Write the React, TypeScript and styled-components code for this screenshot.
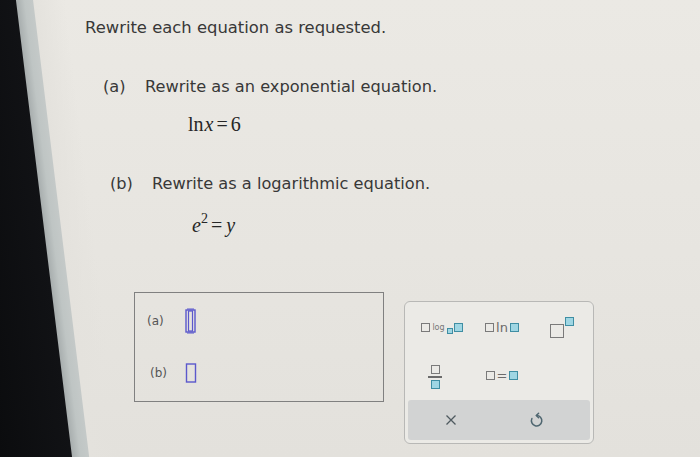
import React from 'react'
import styled, { createGlobalStyle } from 'styled-components'

const GlobalStyle = createGlobalStyle`
  html, body {
    margin: 0;
    padding: 0;
    background: #0b0c0e;
  }
`

export default function App() {
  return (
    <>
      <GlobalStyle />
      <Screen>
        <Page>
          <Heading>Rewrite each equation as requested.</Heading>

          <Part $top={39} $indent={18}>
            <PartLabel>(a)</PartLabel>
            <span>Rewrite as an exponential equation.</span>
          </Part>
          <MathLine $top={17} $indent={103}>
            <Up>ln</Up>
            <It>x</It>
            <Eq>=</Eq>
            <Up>6</Up>
          </MathLine>

          <Part $top={40} $indent={25}>
            <PartLabel>(b)</PartLabel>
            <span>Rewrite as a logarithmic equation.</span>
          </Part>
          <MathLine $top={21} $indent={106}>
            <It>e</It>
            <Sup>2</Sup>
            <Eq>=</Eq>
            <It>y</It>
          </MathLine>

          <BottomRow>
            <AnswerBox>
              <AnswerRow>
                <AnswerLabel>(a)</AnswerLabel>
                <svg width="12" height="26" viewBox="0 0 12 26">
                  <rect x="1" y="2" width="9" height="22" fill="none" stroke="#5b58cc" strokeWidth="1.4" />
                  <rect x="3.5" y="3" width="4" height="20" fill="none" stroke="#5b58cc" strokeWidth="1.2" />
                  <path d="M2 1h7M2 25h7" stroke="#5b58cc" strokeWidth="1" />
                </svg>
              </AnswerRow>
              <AnswerRow>
                <AnswerLabel $shift={3}>(b)</AnswerLabel>
                <svg width="12" height="20" viewBox="0 0 12 20">
                  <rect x="1.5" y="1" width="9" height="18" fill="none" stroke="#5b58cc" strokeWidth="1.4" />
                </svg>
              </AnswerRow>
            </AnswerBox>

            <Keypad>
              <KeyGrid>
                <Key>
                  <Slot />
                  <Small>log</Small>
                  <Slot $teal $tiny $down />
                  <Slot $teal />
                </Key>
                <Key>
                  <Slot />
                  <KeyText>ln</KeyText>
                  <Slot $teal />
                </Key>
                <Key>
                  <Slot $big $down />
                  <Slot $teal $up />
                </Key>
                <Key>
                  <Fraction>
                    <Slot />
                    <Bar />
                    <Slot $teal />
                  </Fraction>
                </Key>
                <Key>
                  <Slot />
                  <KeyText>=</KeyText>
                  <Slot $teal />
                </Key>
              </KeyGrid>
              <ActionBar>
                <ActionButton>
                  <svg width="12" height="12" viewBox="0 0 12 12">
                    <path d="M1.5 1.5l9 9M10.5 1.5l-9 9" stroke="#4f5a60" strokeWidth="1.3" />
                  </svg>
                </ActionButton>
                <ActionButton>
                  <svg width="14" height="16" viewBox="0 0 14 16">
                    <path d="M6.5 3.5a5.2 5.2 0 1 1-4.6 3" fill="none" stroke="#4f6670" strokeWidth="1.5" strokeLinecap="round" />
                    <path d="M8.6 1.2L6.3 3.5l2.3 2.3" fill="none" stroke="#4f6670" strokeWidth="1.5" strokeLinecap="round" strokeLinejoin="round" />
                  </svg>
                </ActionButton>
              </ActionBar>
            </Keypad>
          </BottomRow>
        </Page>
      </Screen>
    </>
  )
}

const Screen = styled.div`
  width: 700px;
  height: 457px;
  overflow: hidden;
  background:
    linear-gradient(
      83deg,
      #0b0c0e 0,
      #111215 71px,
      #a9afaf 72px,
      #bfc5c4 80px,
      #c4c9c8 88px,
      #e4e2dd 89px,
      rgba(228, 226, 221, 0) 120px
    ),
    linear-gradient(180deg, #ebe9e4 0%, #e7e5e0 55%, #e3e1dc 100%);
  font-family: 'DejaVu Sans', Verdana, sans-serif;
  color: #383838;
`

const Page = styled.div`
  padding: 18px 0 0 85px;
`

const Heading = styled.div`
  font-size: 16.4px;
  line-height: 20px;
  height: 20px;
`

const Part = styled.div<{ $top: number; $indent: number }>`
  display: flex;
  margin-top: ${(p) => p.$top}px;
  margin-left: ${(p) => p.$indent}px;
  font-size: 16.2px;
  line-height: 20px;
  height: 20px;
`

const PartLabel = styled.span`
  width: 42px;
  flex: none;
`

const MathLine = styled.div<{ $top: number; $indent: number }>`
  display: flex;
  align-items: baseline;
  margin-top: ${(p) => p.$top}px;
  margin-left: ${(p) => p.$indent}px;
  height: 20px;
  line-height: 20px;
  font-family: 'Liberation Serif', 'Times New Roman', serif;
  font-size: 20px;
  color: #262626;
`

const Up = styled.span`
  font-style: normal;
`

const It = styled.span`
  font-style: italic;
  margin-left: 1px;
`

const Eq = styled.span`
  margin: 0 3px;
`

const Sup = styled.span`
  font-size: 14px;
  position: relative;
  top: -9px;
  margin-left: 0;
`

const BottomRow = styled.div`
  display: flex;
  align-items: flex-start;
  margin-top: 57px;
  margin-left: 49px;
`

const AnswerBox = styled.div`
  width: 250px;
  height: 110px;
  box-sizing: border-box;
  border: 1.5px solid #808080;
  padding: 15px 0 0 12px;
  display: flex;
  flex-direction: column;
  gap: 26px;
`

const AnswerRow = styled.div`
  display: flex;
  align-items: center;
  height: 26px;
`

const AnswerLabel = styled.span<{ $shift?: number }>`
  width: 38px;
  padding-left: ${(p) => p.$shift ?? 0}px;
  box-sizing: border-box;
  font-size: 12px;
  color: #555;
`

const Keypad = styled.div`
  width: 190px;
  height: 143px;
  margin-left: 20px;
  margin-top: 9px;
  box-sizing: border-box;
  border: 1px solid #b8b8b6;
  border-radius: 6px;
  background: #ebeae6;
  padding: 0 3px 3px 3px;
  display: flex;
  flex-direction: column;
`

const KeyGrid = styled.div`
  display: grid;
  grid-template-columns: 60px 60px 60px;
  grid-auto-rows: 48px;
  padding: 1px 0 0 4px;
`

const Key = styled.div`
  display: flex;
  align-items: center;
  justify-content: center;
  gap: 1px;
  color: #6b6b6b;
`

const Slot = styled.span<{ $teal?: boolean; $tiny?: boolean; $big?: boolean; $up?: boolean; $down?: boolean }>`
  display: inline-block;
  box-sizing: border-box;
  width: ${(p) => (p.$big ? 14 : p.$tiny ? 6 : 9)}px;
  height: ${(p) => (p.$big ? 14 : p.$tiny ? 6 : 9)}px;
  border: 1.3px solid ${(p) => (p.$teal ? '#3f8ea3' : '#7a7a7a')};
  background: ${(p) => (p.$teal ? '#9fd6e3' : 'transparent')};
  position: relative;
  top: ${(p) => (p.$up ? -6 : p.$down ? 4 : 0)}px;
`

const Small = styled.span`
  font-size: 8px;
  color: #777;
  margin: 0 1px;
`

const KeyText = styled.span`
  font-size: 13px;
  line-height: 13px;
  color: #6b6b6b;
  margin: 0 1px;
`

const Fraction = styled.div`
  display: flex;
  flex-direction: column;
  align-items: center;
  gap: 2px;
  position: relative;
  left: -7px;
  top: 2px;
`

const Bar = styled.span`
  width: 14px;
  height: 1.3px;
  background: #6b6b6b;
`

const ActionBar = styled.div`
  margin-top: auto;
  height: 40px;
  border-radius: 3px;
  background: #d2d3d3;
  display: grid;
  grid-template-columns: 86px 86px;
`

const ActionButton = styled.div`
  display: flex;
  align-items: center;
  justify-content: center;
`
